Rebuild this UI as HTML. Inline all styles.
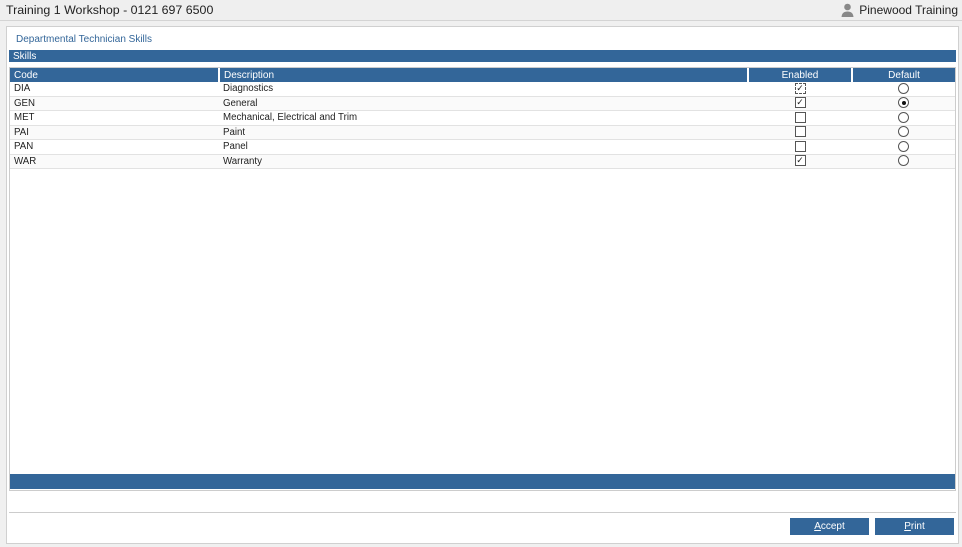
<!DOCTYPE html>
<html><head><style>
body{margin:0;width:962px;height:547px;background:#f0f0f0;font-family:"Liberation Sans",sans-serif;font-size:10px;color:#222;position:relative;overflow:hidden}
.top{position:absolute;left:0;top:0;width:962px;height:20px;background:#efefef;border-bottom:1px solid #d4d4d4;font-size:12.4px}
.panel{position:absolute;left:6px;top:26px;width:951px;height:516px;background:#fff;border:1px solid #d0d0d0}
.blue{background:#336699;color:#fff}
.abs{position:absolute;white-space:nowrap}
table{border-collapse:collapse;table-layout:fixed;position:absolute;left:3px;top:41px;width:945px}
th{height:13px;background:#336699;color:#fff;font-weight:normal;text-align:left;padding:1px 0 0 4px;border-right:2px solid #fff;font-size:10px;line-height:12px}
td{height:12.5px;padding:1px 0 0 4px;border-bottom:1px solid #e2e2e2;font-size:9.7px;line-height:12px}
tr.odd td{background:#fafafa}
.cb{display:inline-block;width:9px;height:9px;border:1px solid #555;background:#fff;position:relative;vertical-align:middle;font-size:9px;line-height:9px;text-align:center}
.rd{display:inline-block;width:9px;height:9px;border:1px solid #555;border-radius:50%;background:#fff;position:relative;vertical-align:middle}
.c{text-align:center;padding:0;}
.btn{position:absolute;top:491px;height:17px;width:79px;background:#336699;color:#fff;text-align:center;line-height:18px;font-size:10px}
</style></head><body>
<div class="top"><span class="abs" style="left:6px;top:3px">Training 1 Workshop - 0121 697 6500</span>
<svg class="abs" style="left:841px;top:3px" width="13" height="14" viewBox="0 0 13 14"><circle cx="6.5" cy="4" r="3.3" fill="#888"/><path d="M0.5 14 Q1 8.5 6.5 8.5 Q12 8.5 12.5 14Z" fill="#888"/></svg>
<span class="abs" style="right:4px;top:3px;font-size:12px">Pinewood Training</span></div>
<div class="panel">
<div class="abs" style="left:9px;top:7px;color:#336699;font-size:10px">Departmental Technician Skills</div>
<div class="abs blue" style="left:2px;top:23px;width:947px;height:12px;line-height:13px;padding-left:4px;box-sizing:border-box">Skills</div>
<div class="abs" style="left:2px;top:40px;width:945px;height:422px;border:1px solid #ccc"></div>
<table>
<colgroup><col style="width:209px"><col style="width:529px"><col style="width:104px"><col style="width:103px"></colgroup>
<tr><th>Code</th><th>Description</th><th style="text-align:center;padding:1px 0 0">Enabled</th><th style="text-align:center;padding:1px 0 0;border-right:0">Default</th></tr>
<tr><td>DIA</td><td>Diagnostics</td><td class="c"><span class="cb" style="border-style:dashed">&#10003;</span></td><td class="c"><span class="rd"></span></td></tr>
<tr class="odd"><td>GEN</td><td>General</td><td class="c"><span class="cb">&#10003;</span></td><td class="c"><span class="rd"><span style="position:absolute;left:2.5px;top:2.5px;width:4px;height:4px;border-radius:50%;background:#111"></span></span></td></tr>
<tr><td>MET</td><td>Mechanical, Electrical and Trim</td><td class="c"><span class="cb"></span></td><td class="c"><span class="rd"></span></td></tr>
<tr class="odd"><td>PAI</td><td>Paint</td><td class="c"><span class="cb"></span></td><td class="c"><span class="rd"></span></td></tr>
<tr><td>PAN</td><td>Panel</td><td class="c"><span class="cb"></span></td><td class="c"><span class="rd"></span></td></tr>
<tr class="odd"><td>WAR</td><td>Warranty</td><td class="c"><span class="cb">&#10003;</span></td><td class="c"><span class="rd"></span></td></tr>
</table>
<div class="abs blue" style="left:3px;top:447px;width:945px;height:15px"></div>
<div class="abs" style="left:2px;top:485px;width:947px;height:1px;background:#ccc"></div>
<div class="btn" style="left:783px"><u>A</u>ccept</div>
<div class="btn" style="left:868px"><u>P</u>rint</div>
</div>
</body></html>
